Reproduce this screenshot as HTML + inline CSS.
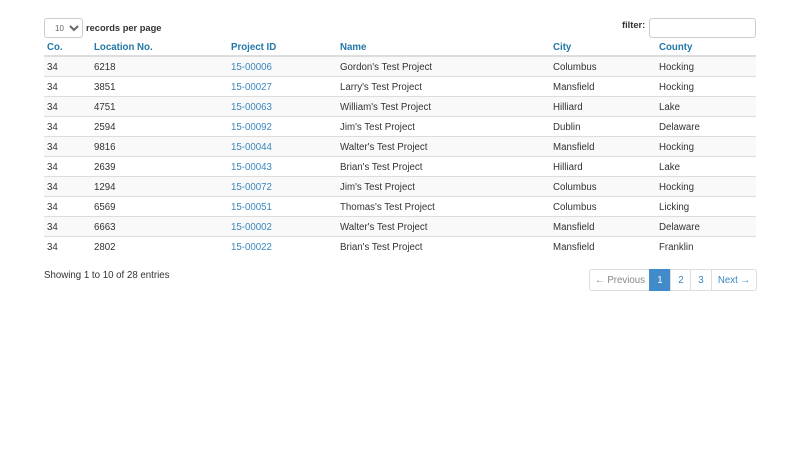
<!DOCTYPE html>
<html><head><style>
body{margin:0;background:#fff;font-family:"Liberation Sans",sans-serif;font-size:9.7px;color:#333;}
.abs{position:absolute}
select{position:absolute;left:44px;top:18px;width:39px;height:20px;border:1px solid #ccc;border-radius:3px;font-size:8px;color:#666;background:#fff;padding:0 0 0 6px;font-family:"Liberation Sans",sans-serif}
table{position:absolute;left:44px;top:37px;width:712px;border-collapse:collapse}
th{font-weight:bold;text-align:left;height:15px;padding:3px 0 0 3px;border-bottom:2px solid #ddd;font-size:9.7px;color:#2378a8;vertical-align:middle}
td{height:18px;padding:1px 0 0 3px;border-top:1px solid #ddd;font-size:9.7px}
tbody tr:nth-child(odd){background:#f9f9f9}
a{color:#3a87c0;text-decoration:none}
.pg{position:absolute;top:269px;height:20px;border:1px solid #ddd;line-height:22px;text-align:center;color:#3a87c0;font-size:9.7px;background:#fff}
</style></head><body>
<select><option>10</option></select>
<div class="abs" style="left:86px;top:23px;font-weight:bold;font-size:9.3px">records per page</div>
<div class="abs" style="left:622px;top:20px;font-weight:bold;font-size:9.3px">filter:</div>
<div class="abs" style="left:649px;top:18px;width:105px;height:18px;border:1px solid #ccc;border-radius:3px"></div>
<table>
<colgroup><col style="width:47px"><col style="width:137px"><col style="width:109px"><col style="width:213px"><col style="width:106px"><col></colgroup>
<thead><tr><th>Co.</th><th>Location No.</th><th>Project ID</th><th>Name</th><th>City</th><th>County</th></tr></thead>
<tbody>
<tr><td>34</td><td>6218</td><td><a>15-00006</a></td><td>Gordon's Test Project</td><td>Columbus</td><td>Hocking</td></tr>
<tr><td>34</td><td>3851</td><td><a>15-00027</a></td><td>Larry's Test Project</td><td>Mansfield</td><td>Hocking</td></tr>
<tr><td>34</td><td>4751</td><td><a>15-00063</a></td><td>William's Test Project</td><td>Hilliard</td><td>Lake</td></tr>
<tr><td>34</td><td>2594</td><td><a>15-00092</a></td><td>Jim's Test Project</td><td>Dublin</td><td>Delaware</td></tr>
<tr><td>34</td><td>9816</td><td><a>15-00044</a></td><td>Walter's Test Project</td><td>Mansfield</td><td>Hocking</td></tr>
<tr><td>34</td><td>2639</td><td><a>15-00043</a></td><td>Brian's Test Project</td><td>Hilliard</td><td>Lake</td></tr>
<tr><td>34</td><td>1294</td><td><a>15-00072</a></td><td>Jim's Test Project</td><td>Columbus</td><td>Hocking</td></tr>
<tr><td>34</td><td>6569</td><td><a>15-00051</a></td><td>Thomas's Test Project</td><td>Columbus</td><td>Licking</td></tr>
<tr><td>34</td><td>6663</td><td><a>15-00002</a></td><td>Walter's Test Project</td><td>Mansfield</td><td>Delaware</td></tr>
<tr><td>34</td><td>2802</td><td><a>15-00022</a></td><td>Brian's Test Project</td><td>Mansfield</td><td>Franklin</td></tr>
</tbody></table>
<div class="abs" style="left:44px;top:270px">Showing 1 to 10 of 28 entries</div>
<div class="pg" style="left:589px;width:60px;color:#888;border-radius:3px 0 0 3px">← Previous</div>
<div class="pg" style="left:649px;width:20px;background:#428bca;border-color:#428bca;color:#fff">1</div>
<div class="pg" style="left:670px;width:20px">2</div>
<div class="pg" style="left:690px;width:20px">3</div>
<div class="pg" style="left:711px;width:44px;border-radius:0 3px 3px 0">Next →</div>
</body></html>
